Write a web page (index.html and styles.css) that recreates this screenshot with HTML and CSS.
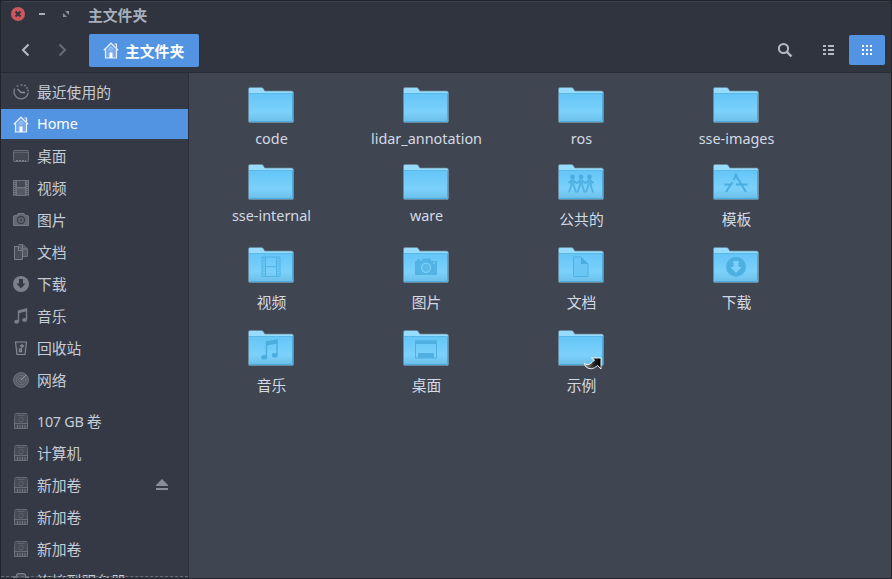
FILE: index.html
```html
<!DOCTYPE html>
<html lang="zh-CN">
<head>
    <meta charset="UTF-8">
    <meta name="viewport" content="width=device-width, initial-scale=1.0">
    <title>主文件夹</title>
    <link rel="stylesheet" href="styles.css">
</head>
<body>

<!-- Shared icons -->
<svg class="defs" width="0" height="0">
    <defs>
        <linearGradient id="folderFill" x1="0" y1="0" x2="0" y2="1">
            <stop offset="0" stop-color="#64c5f8"/>
            <stop offset="0.65" stop-color="#7bd1fb"/>
            <stop offset="0.84" stop-color="#73c8f2"/>
            <stop offset="1" stop-color="#68bbe5"/>
        </linearGradient>
        <linearGradient id="linkFill" x1="0" y1="0" x2="1" y2="0">
            <stop offset="0" stop-color="#999"/>
            <stop offset="0.6" stop-color="#222"/>
            <stop offset="1" stop-color="#000"/>
        </linearGradient>
    </defs>
    <symbol id="folder" viewBox="0 0 46 36">
        <path d="M.5 34V2Q.5.5 2 .5H13.5Q15 .5 15.6 2L16.8 4H43.5Q45.5 4 45.5 6V34Q45.5 35.5 44 35.5H2Q.5 35.5 .5 34Z" fill="#97dcfd" stroke="#6b8798" stroke-width=".7"/>
        <path d="M1 6H45V34Q45 35 44 35H2Q1 35 1 34Z" fill="url(#folderFill)"/>
        <path d="M1 6.5H45" stroke="#5bb9ea"/>
        <path d="M1.5 34.5H44.5M44.5 7V34" stroke="#49a8dc" stroke-width=".9"/>
    </symbol>
    <symbol id="home" viewBox="0 0 16 17">
        <path d="M2.5 8V16H13.5V8L8 3Z" fill="#fff" fill-opacity=".22"/>
        <path d="M.8 8.2 8 1.2 15.2 8.2M2.5 7.5V16H13.5V7.5M13.5 5.5V2H11.5" fill="none" stroke="#e7f0fb" stroke-width="1.2"/>
        <circle cx="8" cy="6.8" r="1.5" fill="none" stroke="#a9caf1" stroke-width=".8"/>
        <path d="M6.5 10.5H9.5V16H6.5Z" fill="#fff"/>
    </symbol>
    <symbol id="drive" viewBox="0 0 16 16">
        <path d="M3 .5H13L14.5 11V15.5H1.5V11Z" fill="#464a55"/>
        <path d="M3 .5H13Q14 .5 14 1.5L14.5 11V15.5H1.5V11L2 1.5Q2 .5 3 .5ZM1.5 10.5H14.5" fill="none" stroke="#6a6e79"/>
        <path d="M4 2.5H12" stroke="#5f636e"/>
        <circle cx="8" cy="6.5" r="2.3" fill="none" stroke="#5d616c"/>
        <path d="M4.5 12V15M7 12V15M9.5 12V15M12 12V15" stroke="#747883"/>
    </symbol>
</svg>

<div class="window">
    <header class="header">
        <div class="titlebar">
            <svg class="controls" width="74" height="20" viewBox="0 0 74 20">
                <circle cx="11" cy="10" r="7" fill="#cc575d"/>
                <path d="M8.5 7.5 13.5 12.5M13.5 7.5 8.5 12.5" stroke="#2f343f" stroke-width="2"/>
                <path d="M32 10H38" stroke="#a8adb8" stroke-width="2"/>
                <path d="M58 7H62V11ZM56 9V13H60Z" fill="#8b919d"/>
            </svg>
            <h1 class="title">主文件夹</h1>
        </div>
        <div class="toolbar">
            <svg class="nav" width="52" height="16" viewBox="0 0 52 16">
                <path d="M9.5 2.5 4 8 9.5 13.5" fill="none" stroke="#b3bac7" stroke-width="2.1"/>
                <path d="M40.5 2.5 46 8 40.5 13.5" fill="none" stroke="#656b77" stroke-width="2.1"/>
            </svg>
            <button class="path">
                <svg width="16" height="17"><use href="#home"/></svg>
                <span>主文件夹</span>
            </button>
            <div class="tools">
                <svg width="16" height="16" viewBox="0 0 16 16">
                    <circle cx="6.5" cy="6.5" r="4.6" fill="none" stroke="#b3bac7" stroke-width="2"/>
                    <path d="M10 10 14.5 14.5" stroke="#b3bac7" stroke-width="2.4"/>
                </svg>
                <svg class="list-view" width="11" height="10" viewBox="0 0 11 10">
                    <path d="M0 1H3M5 1H11M0 5H3M5 5H11M0 9H3M5 9H11" stroke="#b3bac7" stroke-width="2"/>
                </svg>
                <button class="grid-view">
                    <svg width="10" height="10" viewBox="0 0 10 10">
                        <path d="M0 1H10M0 5H10M0 9H10" stroke="#fff" stroke-width="2" stroke-dasharray="2 2"/>
                    </svg>
                </button>
            </div>
        </div>
    </header>

    <div class="main">
        <nav class="sidebar">
            <div class="place">
                <svg width="16" height="16" viewBox="0 0 16 16">
                    <path d="M1.8 4.5A7.1 7.1 0 1 0 15.2 8.5" fill="none" stroke="#777b86" stroke-width="1.5"/>
                    <path d="M3.5 2H5.5M7.5 1H9.5M11 1.5H13M13 4H15M14 6.5H16" stroke="#777b86" stroke-width="1.6"/>
                    <path d="M4.5 5 8 8.5H12" fill="none" stroke="#8b8f99" stroke-width="1.3"/>
                </svg>
                <span>最近使用的</span>
            </div>
            <div class="place active">
                <svg width="16" height="17"><use href="#home"/></svg>
                <span class="latin">Home</span>
            </div>
            <div class="place">
                <svg width="16" height="16" viewBox="0 0 16 16">
                    <rect x=".5" y="2.5" width="15" height="11" rx="1" fill="#454954" stroke="#6c707b"/>
                    <path d="M1 4.5H15" stroke="#5d616c"/>
                    <path d="M3 12.5H13" stroke="#7b7f89" stroke-width="1.2" stroke-dasharray="2 1"/>
                </svg>
                <span>桌面</span>
            </div>
            <div class="place">
                <svg width="16" height="16" viewBox="0 0 16 16">
                    <path d="M0 0H16V16H0Z" fill="#70747f"/>
                    <path d="M4 1H12V7H4Z" fill="#454954"/>
                    <path d="M4 8.5H12V15H4Z" fill="#555964"/>
                    <path d="M1.7 1V16M14.3 1V16" stroke="#41454f" stroke-width="1.2" stroke-dasharray="1 1"/>
                </svg>
                <span>视频</span>
            </div>
            <div class="place">
                <svg width="16" height="16" viewBox="0 0 16 16">
                    <path d="M.5 4.5Q.5 3.5 1.5 3.5H4L5 1.5H11L12 3.5H14.5Q15.5 3.5 15.5 4.5V13.5H.5Z" fill="#646873" stroke="#777b86"/>
                    <circle cx="8" cy="8" r="3.5" fill="#696d78" stroke="#393d49" stroke-width="1.3"/>
                    <circle cx="8" cy="8" r="1.5" fill="#454954"/>
                </svg>
                <span>图片</span>
            </div>
            <div class="place">
                <svg width="16" height="16" viewBox="0 0 16 16">
                    <path d="M5.5 .5H10L14.5 5V12.5H9.5" fill="#555964" stroke="#6f737e"/>
                    <path d="M1.5 2.5H6L9.5 6V15.5H1.5Z" fill="#484c57" stroke="#7c808b"/>
                    <path d="M5.5 2V6.5H9.5M9.5 1V5H14" fill="none" stroke="#7c808b"/>
                </svg>
                <span>文档</span>
            </div>
            <div class="place">
                <svg width="16" height="16" viewBox="0 0 16 16">
                    <circle cx="8" cy="8" r="8" fill="#7c808b"/>
                    <path d="M6 3H10V7.5H12.5L8 12.5 3.5 7.5H6Z" fill="#353945"/>
                </svg>
                <span>下载</span>
            </div>
            <div class="place">
                <svg width="16" height="16" viewBox="0 0 16 16">
                    <path d="M5.5 13.5V3L13.5 1V11.5M5.5 4.5 13.5 2.5" fill="none" stroke="#7a7e89" stroke-width="1.5"/>
                    <ellipse cx="3.6" cy="13.7" rx="2.4" ry="2" fill="#7a7e89"/>
                    <ellipse cx="11.6" cy="12" rx="2.4" ry="2" fill="#7a7e89"/>
                </svg>
                <span>音乐</span>
            </div>
            <div class="place">
                <svg width="16" height="16" viewBox="0 0 16 16">
                    <path d="M2.5 2H13.5L12 14.5H4Z" fill="#3b3f4a" stroke="#858994" stroke-width="1.2"/>
                    <path d="M7 6H11M9 4V8M6.5 9H8.5V11.5H6.5Z" fill="none" stroke="#858994" stroke-width="1.3"/>
                </svg>
                <span>回收站</span>
            </div>
            <div class="place">
                <svg width="16" height="16" viewBox="0 0 16 16">
                    <circle cx="8" cy="8" r="7.4" fill="#555964" stroke="#747883"/>
                    <circle cx="8" cy="8" r="4.8" fill="none" stroke="#6b6f7a"/>
                    <circle cx="8" cy="8" r="2.3" fill="none" stroke="#6b6f7a"/>
                    <path d="M8 8 13 3" stroke="#9296a0"/>
                </svg>
                <span>网络</span>
            </div>
            <div class="place devices">
                <svg width="16" height="16"><use href="#drive"/></svg>
                <span><span class="latin volume">107 GB</span> 卷</span>
            </div>
            <div class="place">
                <svg width="16" height="16"><use href="#drive"/></svg>
                <span>计算机</span>
            </div>
            <div class="place">
                <svg width="16" height="16"><use href="#drive"/></svg>
                <span>新加卷</span>
                <svg class="eject" width="12" height="12" viewBox="0 0 12 12">
                    <path d="M6 0 12 6V7H0V6ZM0 9H12V11H0Z" fill="#8a8e98"/>
                </svg>
            </div>
            <div class="place">
                <svg width="16" height="16"><use href="#drive"/></svg>
                <span>新加卷</span>
            </div>
            <div class="place">
                <svg width="16" height="16"><use href="#drive"/></svg>
                <span>新加卷</span>
            </div>
            <div class="place">
                <svg width="16" height="16" viewBox="0 0 16 16">
                    <path d="M3.5 8V3Q3.5.7 6 .7H10Q12.5.7 12.5 3V8M.5 8.5V4H3.5M12.5 4H15.5V8.5" fill="#464a55" stroke="#7c808b" stroke-width="1.3"/>
                </svg>
                <span>连接到服务器</span>
            </div>
            <div class="more"></div>
        </nav>

        <main class="files">
            <div class="file">
                <svg width="46" height="36"><use href="#folder"/></svg>
                <span class="name latin">code</span>
            </div>
            <div class="file">
                <svg width="46" height="36"><use href="#folder"/></svg>
                <span class="name latin">lidar_annotation</span>
            </div>
            <div class="file">
                <svg width="46" height="36"><use href="#folder"/></svg>
                <span class="name latin">ros</span>
            </div>
            <div class="file">
                <svg width="46" height="36"><use href="#folder"/></svg>
                <span class="name latin">sse-images</span>
            </div>
            <div class="file">
                <svg width="46" height="36"><use href="#folder"/></svg>
                <span class="name latin">sse-internal</span>
            </div>
            <div class="file">
                <svg width="46" height="36"><use href="#folder"/></svg>
                <span class="name latin">ware</span>
            </div>
            <div class="file">
                <svg width="46" height="36" viewBox="0 0 46 36">
                    <use href="#folder"/>
                    <g fill="#4badde">
                        <circle cx="14.5" cy="13" r="2.4"/>
                        <circle cx="23" cy="13" r="2.4"/>
                        <circle cx="31.5" cy="13" r="2.4"/>
                    </g>
                    <path d="M10.5 19 13.5 16.5H15.5L18.7 19 22 16.5H24L27.3 19 30.5 16.5H32.5L35.5 19M13.4 16.5V21L11 28.5M15.6 16.5V21L18 28.5M21.9 16.5V21L19.5 28.5M24.1 16.5V21L26.5 28.5M30.4 16.5V21L28 28.5M32.6 16.5V21L35 28.5" fill="none" stroke="#4fb2e3" stroke-width="1.9"/>
                </svg>
                <span class="name">公共的</span>
            </div>
            <div class="file">
                <svg width="46" height="36" viewBox="0 0 46 36">
                    <use href="#folder"/>
                    <path d="M22 10 33 28M24 10 20.5 16M19.5 18 13 28M11.5 20.5H19M23 20.5H34.5" fill="none" stroke="#4badde" stroke-width="2"/>
                </svg>
                <span class="name">模板</span>
            </div>
            <div class="file">
                <svg width="46" height="36" viewBox="0 0 46 36">
                    <use href="#folder"/>
                    <path d="M14 10H32V29.5H14ZM17.5 10V29.5M28.5 10V29.5M17.5 19.7H28.5" fill="none" stroke="#4fb2e3"/>
                    <path d="M15.8 11V29M30.2 11V29" stroke="#55b6e6" stroke-width="1.8" stroke-dasharray="1.3 1.3"/>
                </svg>
                <span class="name">视频</span>
            </div>
            <div class="file">
                <svg width="46" height="36" viewBox="0 0 46 36">
                    <use href="#folder"/>
                    <path d="M12 14H14V12.3H17V14H18.5L20 11.5H27L28.5 14H34V28H12Z" fill="#52b3e4"/>
                    <circle cx="23" cy="20.7" r="4.6" fill="#5cbbeb" stroke="#7cd0f7" stroke-width="1.2"/>
                    <path d="M30 16H32.5" stroke="#7cd0f7"/>
                </svg>
                <span class="name">图片</span>
            </div>
            <div class="file">
                <svg width="46" height="36" viewBox="0 0 46 36">
                    <use href="#folder"/>
                    <path d="M15.5 10H23L30 17V29.5H15.5Z" fill="#6ac6f4" stroke="#4fb0e1"/>
                    <path d="M23 10V17H30Z" fill="#4badde"/>
                </svg>
                <span class="name">文档</span>
            </div>
            <div class="file">
                <svg width="46" height="36" viewBox="0 0 46 36">
                    <use href="#folder"/>
                    <circle cx="23" cy="19.8" r="10" fill="#4eb0e1"/>
                    <path d="M20.5 14H25.5V20H28.5L23 26 17.5 20H20.5Z" fill="#7bd1fb"/>
                </svg>
                <span class="name">下载</span>
            </div>
            <div class="file">
                <svg width="46" height="36" viewBox="0 0 46 36">
                    <use href="#folder"/>
                    <path d="M18.5 27V12L29 10V25" fill="none" stroke="#4badde" stroke-width="1.4"/>
                    <path d="M18 11.5 29.7 9.5V13.5L18 15.5Z" fill="#4badde"/>
                    <ellipse cx="16.2" cy="27.3" rx="3" ry="2.3" fill="#4badde"/>
                    <ellipse cx="26.7" cy="25.3" rx="3" ry="2.3" fill="#4badde"/>
                </svg>
                <span class="name">音乐</span>
            </div>
            <div class="file">
                <svg width="46" height="36" viewBox="0 0 46 36">
                    <use href="#folder"/>
                    <rect x="12.5" y="11" width="21" height="17" fill="none" stroke="#4fb0e1"/>
                    <path d="M12.5 10.5H33.5V14H12.5ZM15 23H31V28H15Z" fill="#4fb0e1"/>
                </svg>
                <span class="name">桌面</span>
            </div>
            <div class="file">
                <svg class="linked" width="46" height="36" viewBox="0 0 46 36">
                    <use href="#folder"/>
                    <path d="M26.2 33Q29.8 36.5 34 32.5L36.5 30 33.5 28H43V39L39.7 35.5Q33 41.5 27.5 36.5Z" fill="url(#linkFill)" stroke="#fff" stroke-width=".9"/>
                </svg>
                <span class="name">示例</span>
            </div>
        </main>
    </div>
</div>

</body>
</html>
```
FILE: styles.css
```css
* {
    box-sizing: border-box;
}
body {
    margin: 0;
    overflow: hidden;
    background-color: #20232b;
    font-family: "Noto Sans CJK SC", sans-serif;
    font-size: 14.8px;
    color: #d3dae3;
}
svg {
    display: block;
    flex-shrink: 0;
}
.defs {
    position: absolute;
}
.window {
    display: flex;
    flex-direction: column;
    height: 579px;
    border: 1px solid #22252e;
    border-radius: 3px 3px 0 0;
    overflow: hidden;
}
.header {
    height: 72px;
    background-color: #2f343f;
    border-top: 1px solid #3d424d;
    border-bottom: 1px solid #262a33;
}
.titlebar {
    display: flex;
    align-items: center;
    height: 26px;
    padding-left: 6px;
}
.controls {
    margin-top: -2px;
}
.title {
    margin: 0 0 0 7px;
    font-size: 14.8px;
    font-weight: bold;
    line-height: 26px;
    color: #a9afba;
}
.toolbar {
    display: flex;
    align-items: center;
    height: 44px;
    padding: 0 6px 0 18px;
}
.nav {
    margin-top: -1px;
}
button {
    display: flex;
    align-items: center;
    border: none;
    border-radius: 2px;
    background-color: #5294e2;
    color: #fff;
    font: inherit;
}
.path {
    gap: 6px;
    width: 110px;
    height: 33px;
    margin-left: 18px;
    padding: 0 14px;
    font-weight: bold;
    white-space: nowrap;
}
.tools {
    display: flex;
    align-items: center;
    margin-left: auto;
}
.list-view {
    margin: 0 15px 0 30px;
}
.grid-view {
    justify-content: center;
    width: 36px;
    height: 30px;
    padding: 0;
}

/* Body */
.main {
    display: flex;
    flex: 1;
    min-height: 0;
}
.sidebar {
    position: relative;
    width: 188px;
    padding-top: 4px;
    overflow: hidden;
    background-color: #353945;
    border-right: 1px solid #2b2f3a;
}
.place {
    display: flex;
    align-items: center;
    gap: 8px;
    height: 30px;
    margin-bottom: 2px;
    padding: 0 20px 0 12px;
    line-height: 30px;
    color: #c5ccd6;
    white-space: nowrap;
}
.active {
    background-color: #5294e2;
    color: #fff;
}
.devices {
    margin-top: 11px;
}
.eject {
    margin-left: auto;
}
/* Marks that the list goes on below the edge */
.more {
    position: absolute;
    left: 0;
    right: 0;
    bottom: 1px;
    border-bottom: 1px dashed #686c76;
}
.latin {
    font-family: "Noto Sans", sans-serif;
    font-size: 14.4px;
}
.volume {
    letter-spacing: -0.3px;
}
.files {
    display: grid;
    grid-template-columns: repeat(4, 155px);
    align-content: start;
    row-gap: 17px;
    flex: 1;
    padding: 14px 0 0 4px;
    background-color: #404552;
}
.file {
    display: flex;
    flex-direction: column;
    align-items: center;
    gap: 7px;
}
.linked {
    overflow: visible;
}
.name {
    padding-left: 2px;
    line-height: 23px;
}
.name.latin {
    line-height: 17px;
}
```
